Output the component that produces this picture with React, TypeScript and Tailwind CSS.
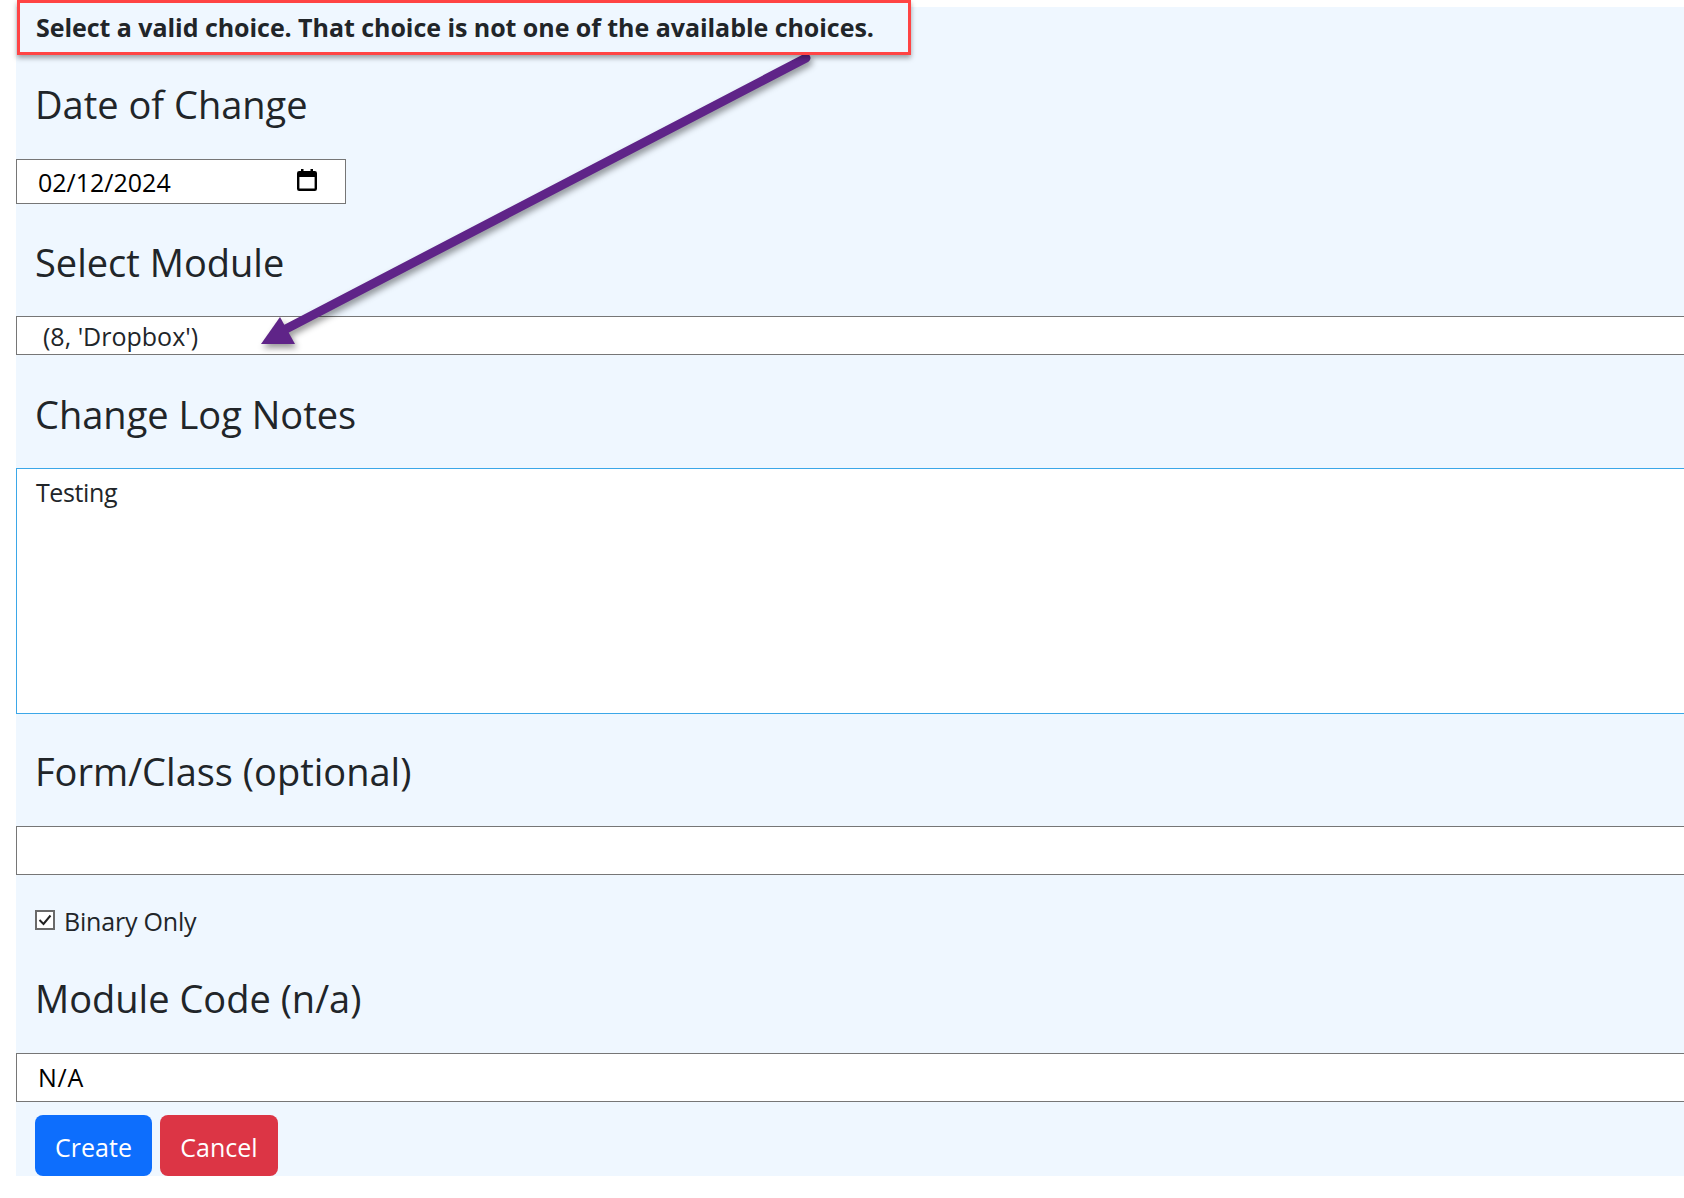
const fontStack = { fontFamily: '"Open Sans", "Noto Sans", sans-serif' };

function Heading({ children, className }: { children: React.ReactNode; className: string }) {
  return (
    <h3 className={`ml-[19px] text-[38px] leading-[44px] text-[#212529] ${className}`}>
      {children}
    </h3>
  );
}

function Arrow() {
  return (
    <svg
      className="absolute left-0 top-0 drop-shadow-[2px_4px_3px_rgba(0,0,0,0.4)]"
      width="840"
      height="360"
      viewBox="0 0 840 360"
    >
      <line x1="806" y1="58" x2="284" y2="330" stroke="#5f2488" strokeWidth="9" strokeLinecap="round" />
      <polygon points="261,344 280,317 295,344" fill="#5f2488" />
    </svg>
  );
}

export default function App() {
  return (
    <div className="relative h-[1198px] w-[1684px] overflow-hidden bg-white pt-[7px]" style={fontStack}>
      <form className="ml-4 flex h-[1169px] w-[1690px] flex-col bg-[#eff7ff]">
        <Heading className="mt-[75px]">Date of Change</Heading>

        <div className="mt-[33px] flex h-[45px] w-[330px] items-center justify-between border border-[#767676] bg-white pl-[21px] pr-[28px]">
          <span className="pt-[2px] text-[25px] text-black">02/12/2024</span>
          <svg width="20" height="22" viewBox="0 0 20 22" className="mb-1">
            <rect x="1.2" y="3.2" width="17.6" height="17.6" rx="1" fill="none" stroke="#000" strokeWidth="2.4" />
            <rect x="1" y="3" width="18" height="5" fill="#000" />
            <rect x="4" y="0" width="2.5" height="4" fill="#000" />
            <rect x="13.5" y="0" width="2.5" height="4" fill="#000" />
          </svg>
        </div>

        <Heading className="mt-[36px]">Select Module</Heading>

        <div className="mt-[32px] flex h-[39px] items-center border border-[#767676] bg-white pl-[26px]">
          <span className="pt-[3px] text-[25px] text-[#212529]">(8, 'Dropbox')</span>
        </div>

        <Heading className="mt-[37px]">Change Log Notes</Heading>

        <div className="mt-[32px] h-[246px] border border-[#3ba7e8] bg-white pl-[19px] pt-[5px]">
          <span className="text-[25px] tracking-[-0.4px] text-[#212529]">Testing</span>
        </div>

        <Heading className="mt-[35px]">Form/Class (optional)</Heading>

        <div className="mt-[33px] h-[49px] border border-[#767676] bg-white" />

        <label className="ml-[19px] mt-[30px] flex items-center gap-[9px]">
          <svg width="20" height="20" viewBox="0 0 20 20" className="mb-[3px]">
            <rect x="1" y="1" width="18" height="18" fill="#fff" stroke="#6a6a6a" strokeWidth="2" />
            <path d="M4.5 10 L8.5 14 L15.5 5.5" fill="none" stroke="#222" strokeWidth="2" />
          </svg>
          <span className="text-[25px] leading-[32px] tracking-[-0.2px] text-[#212529]">Binary Only</span>
        </label>

        <Heading className="mt-[39px]">Module Code (n/a)</Heading>

        <div className="mt-[33px] flex h-[49px] items-center border border-[#767676] bg-white pl-[21px]">
          <span className="text-[25px] tracking-[0.8px] text-black">N/A</span>
        </div>

        <div className="ml-[19px] mt-[13px] flex gap-2">
          <button type="button" className="flex h-[61px] w-[117px] items-center justify-center rounded-lg bg-[#0d6efd] pt-1 text-[25px] text-white">
            Create
          </button>
          <button type="button" className="flex h-[61px] w-[118px] items-center justify-center rounded-lg bg-[#dc3545] pt-1 text-[25px] text-white">
            Cancel
          </button>
        </div>
      </form>

      <Arrow />

      <div className="absolute left-[17px] top-0 flex h-[55px] w-[894px] items-center border-[3px] border-[#ff4444] bg-[#eff7ff] pl-4 shadow-[0_3px_5px_rgba(0,0,0,0.35)]">
        <span className="text-[25px] font-bold tracking-[-0.05px] text-[#212529]">
          Select a valid choice. That choice is not one of the available choices.
        </span>
      </div>
    </div>
  );
}
